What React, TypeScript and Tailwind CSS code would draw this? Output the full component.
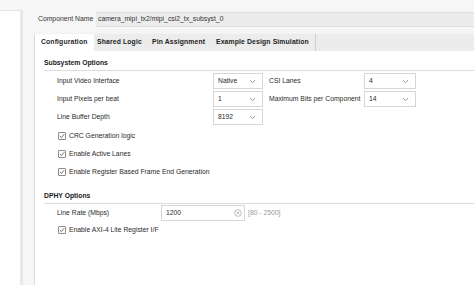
import React from 'react';

function Chevron() {
  return (
    <svg width="7" height="5" viewBox="0 0 7 5" className="shrink-0">
      <path d="M1 1.2 L3.5 3.6 L6 1.2" fill="none" stroke="#8a8a8a" strokeWidth="0.9" />
    </svg>
  );
}

function Select({ value, width }: { value: string; width: string }) {
  return (
    <div className={`${width} h-[16px] bg-white border border-[#d6d6d6] flex items-center justify-between pl-[4px] pr-[6px]`}>
      <span>{value}</span>
      <Chevron />
    </div>
  );
}

function Check({ label }: { label: string }) {
  return (
    <div className="h-[18px] flex items-center pl-[14px] gap-[3px]">
      <div className="w-[8px] h-[8px] border border-[#8c8c8c] rounded-[1px] bg-white flex items-center justify-center">
        <svg width="7" height="6" viewBox="0 0 7 6">
          <path d="M1 3 L2.8 4.8 L6 1" fill="none" stroke="#444" strokeWidth="0.9" />
        </svg>
      </div>
      <span>{label}</span>
    </div>
  );
}

function Section({ title }: { title: string }) {
  return (
    <div className="h-[20px] flex items-end pb-[3px] border-b border-[#dcdcdc]">
      <span className="font-bold text-[#1a1a1a]">{title}</span>
    </div>
  );
}

const tabs = [
  { label: 'Configuration', w: 'w-[60px] pl-[6px]' },
  { label: 'Shared Logic', w: 'w-[54px] pl-[3px]' },
  { label: 'Pin Assignment', w: 'w-[64px] pl-[4px]' },
  { label: 'Example Design Simulation', w: 'w-[104px] pl-[4px]' },
];

export default function App() {
  return (
    <div className="w-[474px] h-[285px] bg-[#f6f6f6] flex overflow-hidden font-['Liberation_Sans',Arial,sans-serif] text-[6.8px] text-[#2a2a2a] leading-none whitespace-nowrap">
      {/* left side panel */}
      <div className="w-[23px] mt-[10px] bg-white border-r-[3px] border-[#e8e8e8] border-t border-t-[#e4e4e4]" />

      <div className="flex-1 flex flex-col pl-[11px]">
        {/* component name */}
        <div className="mt-[12px] h-[15px] flex items-center">
          <span className="w-[62px] pl-[4px] text-[#333]">Component Name</span>
          <div className="flex-1 h-full bg-[#ececec] border-y border-[#dedede] flex items-center pl-[2px] text-[#333]">
            camera_mipi_tx2/mipi_csi2_tx_subsyst_0
          </div>
        </div>

        {/* tabs */}
        <div className="mt-[6px] h-[18px] bg-[#ececec] flex border-t border-[#f2f2f2]">
          {tabs.map((t, i) => (
            <div
              key={t.label}
              className={`${t.w} h-full flex items-center font-bold tracking-[0.15px] ${
                i === 0 ? 'bg-white border-l border-[#dadada]' : 'text-[#222]'
              } ${i === 3 ? 'border-r border-[#cfcfcf]' : ''}`}
            >
              {t.label}
            </div>
          ))}
        </div>

        {/* content */}
        <div className="flex-1 bg-white border-l border-[#dadada] pl-[9px] flex flex-col">
          <Section title="Subsystem Options" />
          <div className="pl-[13px] pt-[2px] grid grid-cols-[156px_50px_101px_52px] gap-y-[2px] items-center">
            <span>Input Video Interface</span>
            <Select value="Native" width="w-[50px]" />
            <span className="pl-[6px]">CSI Lanes</span>
            <Select value="4" width="w-[52px]" />
            <span>Input Pixels per beat</span>
            <Select value="1" width="w-[50px]" />
            <span className="pl-[6px]">Maximum Bits per Component</span>
            <Select value="14" width="w-[52px]" />
            <span>Line Buffer Depth</span>
            <Select value="8192" width="w-[50px]" />
          </div>
          <div className="mt-[2px]">
            <Check label="CRC Generation logic" />
            <Check label="Enable Active Lanes" />
            <Check label="Enable Register Based Frame End Generation" />
          </div>

          <div className="mt-[3px]">
            <Section title="DPHY Options" />
          </div>
          <div className="pl-[13px] pt-[1px] flex items-center h-[17px]">
            <span className="w-[104px]">Line Rate (Mbps)</span>
            <div className="w-[84px] h-[16px] border border-[#d6d6d6] bg-white flex items-center justify-between pl-[4px] pr-[2px]">
              <span>1200</span>
              <svg width="8" height="8" viewBox="0 0 8 8">
                <circle cx="4" cy="4" r="3.3" fill="none" stroke="#b0b0b0" strokeWidth="0.8" />
                <path d="M2.7 2.7 L5.3 5.3 M5.3 2.7 L2.7 5.3" stroke="#b0b0b0" strokeWidth="0.8" />
              </svg>
            </div>
            <span className="ml-[3px] text-[#9a9a9a]">[80 - 2500]</span>
          </div>
          <Check label="Enable AXI-4 Lite Register I/F" />
        </div>
      </div>
    </div>
  );
}
